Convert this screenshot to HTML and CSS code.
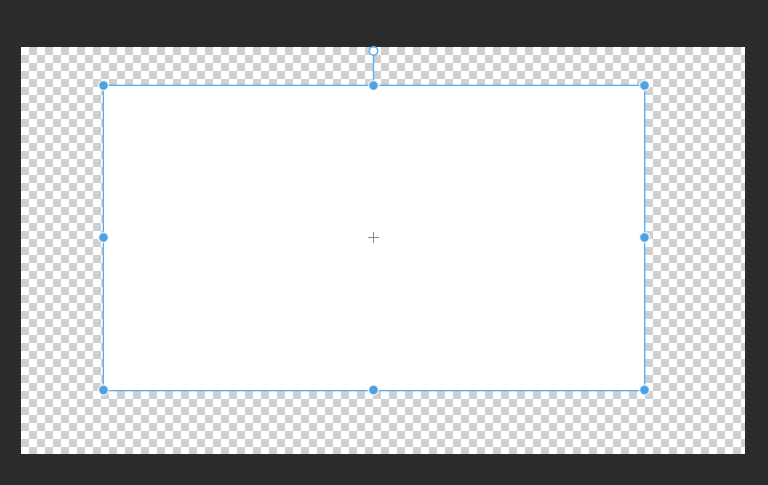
FILE: index.html
```html
<!DOCTYPE html>
<html>
<head>
<meta charset="utf-8">
<link rel="stylesheet" href="styles.css">
</head>
<body>
<div class="stage">
  <div class="canvas">
    <div class="shape"></div>
    <svg class="selection" width="724" height="407" viewBox="0 0 724 407">
      <line x1="352.5" y1="8" x2="352.5" y2="38" stroke="#5aacee" stroke-width="1.3"/>
      <g stroke="#8a8a8a" stroke-width="1" shape-rendering="crispEdges">
        <line x1="347" y1="190.5" x2="358" y2="190.5"/>
        <line x1="352.5" y1="185" x2="352.5" y2="196"/>
      </g>
      <circle cx="352.5" cy="4" r="4.2" fill="#fff" stroke="#5aacee" stroke-width="1.5"/>
      <g fill="#4ea2e2" stroke="rgba(255,255,255,0.75)" stroke-width="1.6">
        <circle cx="82.5" cy="38.5" r="5"/>
        <circle cx="352.5" cy="38.5" r="5"/>
        <circle cx="623.5" cy="38.5" r="5"/>
        <circle cx="82.5" cy="190.5" r="5"/>
        <circle cx="623.5" cy="190.5" r="5"/>
        <circle cx="82.5" cy="343" r="5"/>
        <circle cx="352.5" cy="343" r="5"/>
        <circle cx="623.5" cy="343" r="5"/>
      </g>
    </svg>
  </div>
</div>
</body>
</html>
```
FILE: styles.css
```css
html, body {
  margin: 0;
  padding: 0;
  background: #2b2b2b;
  width: 768px;
  height: 485px;
  overflow: hidden;
}
.stage {
  padding: 47px 0 0 21px;
}
.canvas {
  position: relative;
  width: 724px;
  height: 407px;
  background-color: #ffffff;
  background-image: conic-gradient(#d0d0d0 25%, #ffffff 0 50%, #d0d0d0 0 75%, #ffffff 0);
  background-size: 16px 16px;
}
.shape {
  position: absolute;
  left: 82px;
  top: 38px;
  width: 540px;
  height: 304px;
  background: #ffffff;
  border: 1px solid #5aacee;
  box-shadow: 0 0 0 1px rgba(90, 172, 238, 0.3);
}
.selection {
  position: absolute;
  left: 0;
  top: 0;
  overflow: visible;
}
```
